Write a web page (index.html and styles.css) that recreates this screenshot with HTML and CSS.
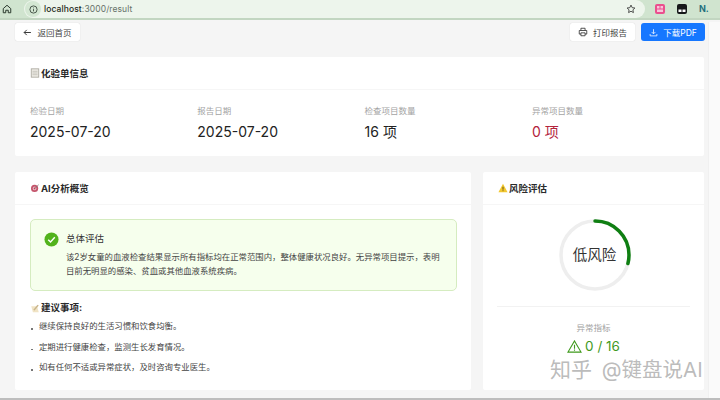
FILE: index.html
```html
<!DOCTYPE html>
<html lang="zh-CN">
  <head>
    <meta charset="UTF-8" />
    <meta name="viewport" content="width=device-width, initial-scale=1.0" />
    <title>化验单结果</title>
    <link rel="stylesheet" href="styles.css">
  </head>
  <body>
    <div class="browser-bar">
      <svg class="home-icon" viewBox="0 0 12 12" width="10" height="10"><path d="M1.500 5.500 6 1.500l4.500 4v5h-3v-3h-3v3h-3z" fill="none" stroke="#2b3a2e" stroke-width="1.200"/></svg>
      <div class="address">
        <span class="site-info"><svg viewBox="0 0 12 12" width="9" height="9"><circle cx="6" cy="6" r="4.800" fill="none" stroke="#3c4a3e" stroke-width="1.200"/><path d="M6 5.500v3M6 3.400v1" stroke="#3c4a3e" stroke-width="1.200"/></svg></span>
        <span class="host">localhost</span><span class="path">:3000/result</span>
        <svg class="star" viewBox="0 0 12 12" width="10" height="10"><path d="m6 1.300 1.400 3.100 3.300.4-2.400 2.200.6 3.300L6 8.700l-2.900 1.600.6-3.300-2.400-2.200 3.300-.4z" fill="none" stroke="#333" stroke-width="1"/></svg>
      </div>
      <div class="extensions">
        <svg viewBox="0 0 10 10" width="10" height="10"><rect width="10" height="10" rx="2" fill="#ea4f8e"/><rect x="2" y="2" width="2.500" height="2.500" fill="#f8c4da"/><rect x="5.500" y="2" width="2.500" height="2.500" fill="#f8c4da"/><rect x="2" y="5.500" width="6" height="2.500" fill="#f8c4da"/></svg>
        <svg viewBox="0 0 10 10" width="10" height="10"><rect width="10" height="10" rx="2" fill="#16181a"/><rect x="1.500" y="5.500" width="3" height="2.500" fill="#fff"/><rect x="5.500" y="5.500" width="3" height="2.500" fill="#fff"/></svg>
        <span class="ext-text">N.</span>
      </div>
    </div>

    <div class="page">
      <div class="toolbar">
        <button class="btn btn-back">
          <svg viewBox="0 0 12 12" width="9" height="9"><path d="M10.500 6h-9M5 2.500 1.500 6 5 9.500" fill="none" stroke="#333" stroke-width="1.300"/></svg>
          返回首页
        </button>
        <div class="toolbar-right">
          <button class="btn btn-print">
            <svg viewBox="0 0 12 12" width="10" height="10"><path d="M3.500 4V1.500h5V4M3.500 8.500H1.500V4.200h9v4.300h-2M3.500 7h5v3.500h-5z" fill="none" stroke="#333" stroke-width="1"/></svg>
            打印报告
          </button>
          <button class="btn btn-primary">
            <svg viewBox="0 0 12 12" width="9" height="9"><path d="M6 1.500v6M3.500 5.300 6 7.800l2.500-2.500M1.500 8v2.500h9V8" fill="none" stroke="#fff" stroke-width="1"/></svg>
            下载PDF
          </button>
        </div>
      </div>

      <section class="card">
        <div class="card-head">
          <svg class="emoji" viewBox="0 0 12 12" width="10" height="10"><rect x="1.500" y="1" width="9" height="10" fill="#eceae4" stroke="#a9a69d" stroke-width="1"/><path d="M3 4h6M3 6h6M3 8h6" stroke="#b9b6ad" stroke-width=".8"/></svg>
          化验单信息
        </div>
        <div class="info-grid">
          <div>
            <div class="label">检验日期</div>
            <div class="value">2025-07-20</div>
          </div>
          <div>
            <div class="label">报告日期</div>
            <div class="value">2025-07-20</div>
          </div>
          <div>
            <div class="label">检查项目数量</div>
            <div class="value">16 项</div>
          </div>
          <div>
            <div class="label">异常项目数量</div>
            <div class="value value-danger">0 项</div>
          </div>
        </div>
      </section>

      <div class="columns">
        <section class="card">
          <div class="card-head">
            <svg class="emoji" viewBox="0 0 12 12" width="10" height="10"><circle cx="5.500" cy="6.500" r="4.300" fill="#c4546b"/><circle cx="5.500" cy="6.500" r="2.200" fill="#e8b9c2"/><circle cx="5.500" cy="6.500" r="1" fill="#b8405a"/><path d="M6 6l4.500-4" stroke="#777" stroke-width=".8"/></svg>
            AI分析概览
          </div>
          <div class="overview">
            <div class="alert">
              <svg class="alert-icon" viewBox="0 0 16 16" width="15" height="15"><circle cx="8" cy="8" r="7.500" fill="#52b31c"/><path d="m4.500 8.200 2.500 2.500 4.500-5" fill="none" stroke="#fff" stroke-width="1.500"/></svg>
              <div>
                <div class="alert-title">总体评估</div>
                <p class="alert-text">该2岁女童的血液检查结果显示所有指标均在正常范围内，整体健康状况良好。无异常项目提示，表明目前无明显的感染、贫血或其他血液系统疾病。</p>
              </div>
            </div>
            <div class="advice-title">
              <svg class="emoji" viewBox="0 0 12 12" width="10" height="10"><path d="M1.500 4h7l2 7h-7z" fill="#f0e3c4"/><path d="M4 8l5-6 1.500 1-5 6z" fill="#c9b58c"/></svg>
              建议事项:
            </div>
            <ul class="advice">
              <li>继续保持良好的生活习惯和饮食均衡。</li>
              <li>定期进行健康检查，监测生长发育情况。</li>
              <li>如有任何不适或异常症状，及时咨询专业医生。</li>
            </ul>
          </div>
        </section>

        <section class="card">
          <div class="card-head">
            <svg class="emoji" viewBox="0 0 12 12" width="10" height="10"><path d="M6 1 11.500 11H.5z" fill="#f3c82f"/><path d="M6 4.500v3.500M6 8.800v1" stroke="#4a3c10" stroke-width="1"/></svg>
            风险评估
          </div>
          <div class="risk">
            <div class="gauge">
              <svg viewBox="0 0 72 72" width="72" height="72">
                <circle cx="36" cy="36" r="34" fill="none" stroke="#eeeeee" stroke-width="3.500"/>
                <circle class="gauge-bar" cx="36" cy="36" r="34" fill="none" stroke="#0f7f12" stroke-width="3.500" stroke-linecap="round" stroke-dasharray="62 220"/>
              </svg>
              <span class="gauge-text">低风险</span>
            </div>
            <div class="risk-foot">
              <div class="label">异常指标</div>
              <div class="risk-count">
                <svg viewBox="0 0 16 14" width="15" height="13"><path d="M8 1 15 13H1z" fill="none" stroke="#3f9a1c" stroke-width="1.200"/><path d="M8 5v4.500M8 10.300v1.200" stroke="#3f9a1c" stroke-width="1.200"/></svg>
                0 / 16
              </div>
            </div>
          </div>
        </section>
      </div>
    </div>

    <div class="scroll-track"></div>
    <div class="watermark"><span class="watermark-zh">知乎</span> @键盘说AI</div>
  </body>
</html>
```

FILE: styles.css
```css
* {
  margin: 0;
  padding: 0;
  box-sizing: border-box;
}

body {
  width: 720px;
  height: 400px;
  overflow: hidden;
  position: relative;
  background-color: #f5f5f5;
  font-family: Inter, "Noto Sans CJK SC", sans-serif;
  color: #222;
  border-bottom: 2px solid #bdbdbd;
}

.browser-bar {
  height: 20px;
  display: flex;
  align-items: center;
  background-color: #d0e4cf;
  border-bottom: 2px solid #c2d6c1;
  padding-left: 1px;
}

.home-icon {
  flex: none;
  margin: 0 12px 0 1px;
}

.address {
  flex: 1;
  height: 18px;
  display: flex;
  align-items: center;
  background-color: #edf5ec;
  border-radius: 9px;
  font-size: 8.500px;
  letter-spacing: 0.100px;
  margin-right: 75px;
  padding: 0 9px 0 1px;
}

.site-info {
  width: 16px;
  height: 16px;
  margin-right: 3px;
  border-radius: 50%;
  background-color: #d4e7d3;
  display: flex;
  align-items: center;
  justify-content: center;
}

.host {
  color: #1f2a20;
  font-weight: 500;
}

.path {
  color: #67736a;
}

.star {
  margin-left: auto;
}

.extensions {
  display: flex;
  align-items: center;
  gap: 12px;
  position: absolute;
  top: 3px;
  left: 655px;
}

.ext-text {
  font-size: 9px;
  font-weight: 700;
  color: #24707d;
}

.page {
  padding: 3px 16px 0 15px;
}

.toolbar {
  display: flex;
  justify-content: space-between;
  margin-right: -1px;
  margin-bottom: 16px;
}

.toolbar-right {
  display: flex;
  gap: 6px;
}

.btn {
  height: 18px;
  display: flex;
  align-items: center;
  gap: 5px;
  border: none;
  background-color: #fff;
  border-radius: 2px;
  font-family: inherit;
  font-size: 8.500px;
  color: #444;
  box-shadow: 0 0 1px rgba(0, 0, 0, 0.2);
}

.btn-back {
  width: 65px;
  justify-content: center;
}

.btn-print {
  width: 65px;
  justify-content: center;
}

.btn-primary {
  width: 64px;
  justify-content: center;
  background-color: #1677ff;
  color: #fff;
  border-radius: 3px;
  box-shadow: none;
}

.card {
  background-color: #fff;
  border-radius: 2px;
}

.card-head {
  height: 33px;
  display: flex;
  align-items: center;
  gap: 1px;
  padding-left: 15px;
  font-size: 9.500px;
  font-weight: 700;
  color: #2a2a2a;
  border-bottom: 1px solid #f6f6f6;
}

.emoji {
  flex: none;
}

.info-grid {
  display: grid;
  grid-template-columns: repeat(4, 167.300px);
  padding: 15px 0 15px 15px;
  height: 66px;
}

.label {
  font-size: 8.500px;
  line-height: 12px;
  color: #a3a3a3;
}

.value {
  margin-top: 5px;
  font-size: 14px;
  line-height: 20px;
  color: #222;
}

.value-danger {
  color: #b3233b;
}

.columns {
  display: grid;
  grid-template-columns: 456px 221px;
  gap: 12px;
  margin-top: 16px;
}

.overview {
  padding: 14px 14px 0 15px;
  height: 185px;
}

.alert {
  height: 72px;
  display: flex;
  gap: 7px;
  padding: 12px 14px 12px 13px;
  background-color: #f6ffed;
  border: 1px solid #d5ecc0;
  border-radius: 5px;
}

.alert-icon {
  flex: none;
}

.alert-title {
  font-size: 9.500px;
  line-height: 14px;
  color: #333;
  margin-bottom: 4px;
}

.alert-text {
  font-size: 8.400px;
  line-height: 14px;
  color: #444;
}

.advice-title {
  display: flex;
  align-items: center;
  gap: 1px;
  margin-top: 10px;
  font-size: 9.500px;
  line-height: 14px;
  font-weight: 700;
  color: #2a2a2a;
}

.advice {
  list-style: none;
  margin-top: 5px;
}

.advice li {
  position: relative;
  padding-left: 9px;
  margin-bottom: 8.500px;
  font-size: 8.400px;
  line-height: 12px;
  color: #444;
}

.advice li::before {
  content: "";
  position: absolute;
  left: 1px;
  top: 8px;
  width: 1.500px;
  height: 1.500px;
  background-color: #777;
}

.risk {
  padding: 14px 14px 0;
  text-align: center;
}

.gauge {
  position: relative;
  width: 72px;
  height: 72px;
  margin: 0 auto;
  left: 1px;
}

.gauge svg {
  display: block;
}

.gauge-bar {
  transform: rotate(-90deg);
  transform-origin: 36px 36px;
}

.gauge-text {
  position: absolute;
  inset: 0;
  display: flex;
  align-items: center;
  justify-content: center;
  padding-bottom: 3px;
  font-size: 14.500px;
  color: #333;
}

.risk-foot {
  margin-top: 15px;
  padding-top: 15px;
  border-top: 1px solid #f2f2f2;
}

.risk-count {
  display: flex;
  align-items: center;
  justify-content: center;
  gap: 3px;
  margin-top: 2px;
  font-size: 13.500px;
  line-height: 20px;
  color: #3f9a1c;
}

.scroll-track {
  position: absolute;
  top: 22px;
  right: 0;
  bottom: 0;
  width: 12px;
  background-color: #fafafa;
  border-left: 1px solid #f0f0f0;
}

.watermark {
  position: absolute;
  left: 550px;
  top: 358px;
  font-size: 20.500px;
  line-height: 24px;
  white-space: nowrap;
  color: rgba(170, 170, 170, 0.8);
  text-shadow: 0 0 1px rgba(255, 255, 255, 0.8);
}

.watermark-zh {
  font-size: 21px;
  margin-right: 4px;
}
```
